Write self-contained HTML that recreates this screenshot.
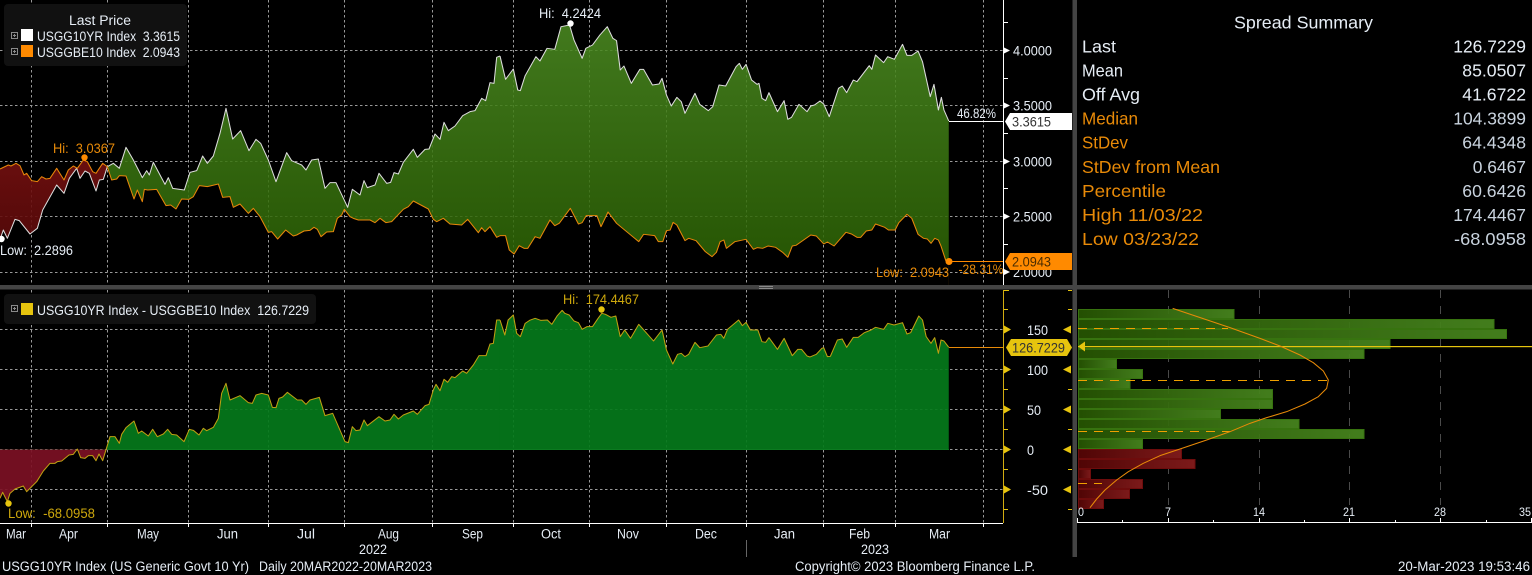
<!DOCTYPE html>
<html><head><meta charset="utf-8"><title>Chart</title>
<style>
html,body{margin:0;padding:0;background:#000;width:1532px;height:575px;overflow:hidden}
svg{display:block}
text{font-family:"Liberation Sans",sans-serif;font-size:13.5px;fill:#e6edf5;white-space:pre}
.a{font-size:14px}
.s{font-size:17.5px}
.o{fill:#e88a08}
.y{fill:#cda70c}
.v{fill:#c9d3de}
.k{fill:#333}
.h{font-size:12px}
</style></head>
<body>
<svg width="1532" height="575" viewBox="0 0 1532 575" xmlns="http://www.w3.org/2000/svg">
<defs>
<linearGradient id="gg" gradientUnits="userSpaceOnUse" x1="0" y1="20" x2="0" y2="265"><stop offset="0" stop-color="#4c8c22"/><stop offset="1" stop-color="#2c6204"/></linearGradient>
<linearGradient id="rg" gradientUnits="userSpaceOnUse" x1="0" y1="160" x2="0" y2="240"><stop offset="0" stop-color="#751010"/><stop offset="1" stop-color="#5c0a0a"/></linearGradient>
<linearGradient id="hg" x1="0" y1="0" x2="1" y2="0"><stop offset="0" stop-color="#265402"/><stop offset="1" stop-color="#47851e"/></linearGradient>
<linearGradient id="hr" x1="0" y1="0" x2="1" y2="0"><stop offset="0" stop-color="#500505"/><stop offset="1" stop-color="#7c1a1a"/></linearGradient>
<g id="wp">
<polygon transform="scale(.33333)" points="0,870 0,718 10,690 22,715 45,658 58,662 90,702 112,685 128,630 170,555 192,580 208,535 230,505 240,535 255,513 268,520 288,573 298,540 310,538 322,500 340,490 358,505 378,442 400,480 427,533 440,512 448,525 460,487 495,553 505,533 518,565 553,570 570,517 590,512 608,468 622,490 640,468 660,400 678,325 698,417 722,392 747,452 768,418 782,430 805,480 828,545 860,458 875,482 905,495 918,510 935,480 955,477 975,565 990,548 1008,548 1043,622 1057,568 1080,585 1092,542 1102,563 1125,555 1137,520 1160,550 1172,547 1182,518 1195,522 1210,487 1240,448 1252,472 1275,448 1287,447 1305,402 1320,418 1332,367 1345,392 1365,378 1388,347 1410,335 1425,332 1445,295 1457,302 1470,248 1482,250 1490,172 1500,168 1500,870"/>
<polygon transform="translate(500 0) scale(.36996 .33333)" points="0,870 0,168 15,238 36,207 48,270 55,272 68,227 97,170 108,183 127,145 148,148 165,80 188,75 200,120 222,175 232,145 250,135 270,105 290,80 305,115 315,122 325,210 335,198 355,250 378,208 388,208 412,255 430,252 438,235 450,285 463,318 478,292 490,305 500,340 527,280 540,313 563,332 575,320 592,255 610,258 638,200 647,190 655,208 665,193 680,240 695,253 700,250 708,295 718,302 727,278 750,335 768,302 778,358 788,352 808,313 830,335 840,318 850,315 865,303 875,312 890,350 915,265 925,258 937,278 955,240 965,245 998,197 1005,208 1015,165 1037,188 1048,170 1066,178 1088,133 1100,166 1113,166 1130,153 1142,185 1163,290 1173,253 1185,330 1193,292 1200,330 1213,363 1213,870"/>
</g>
<g id="op">
<polygon transform="scale(.33333)" points="0,870 0,507 25,495 33,498 48,490 60,497 72,525 80,520 95,542 112,545 125,530 138,537 150,535 170,505 192,540 205,510 220,498 232,505 250,480 262,485 278,515 288,520 308,490 322,500 335,540 350,537 358,527 378,528 402,597 412,570 427,605 433,568 443,570 470,568 498,617 512,615 528,627 545,597 567,598 580,590 598,557 622,560 655,552 668,592 690,590 700,622 720,612 745,640 760,625 780,650 805,697 815,695 833,717 857,690 880,708 890,705 912,693 930,691 942,682 952,688 963,710 980,696 1000,695 1012,655 1025,645 1033,628 1050,650 1060,655 1075,660 1110,660 1125,668 1140,655 1158,668 1175,665 1210,628 1225,620 1240,603 1285,627 1300,658 1310,665 1330,655 1350,672 1385,675 1403,658 1435,698 1445,683 1455,695 1470,680 1490,712 1500,707 1500,870"/>
<polygon transform="translate(500 0) scale(.36996 .33333)" points="0,870 0,707 15,707 25,750 38,762 52,737 65,745 75,745 95,710 108,715 135,660 148,677 160,670 190,625 212,672 222,668 233,647 262,647 273,680 292,636 315,670 375,725 388,703 418,707 428,725 440,725 450,692 460,690 468,667 478,675 500,722 510,715 530,722 555,755 573,770 585,757 595,725 605,720 612,745 635,725 665,718 685,748 695,743 710,745 725,738 745,742 765,758 778,772 790,738 800,736 840,705 855,708 875,732 885,726 903,738 935,697 950,702 965,712 975,712 990,693 1005,690 1015,672 1040,682 1050,690 1068,690 1078,668 1100,643 1113,655 1130,703 1145,715 1155,717 1165,730 1175,715 1185,720 1192,738 1205,782 1213,785 1213,870"/>
</g>
<mask id="mg" maskUnits="userSpaceOnUse" x="0" y="0" width="1010" height="290"><use href="#wp" fill="#fff"/><use href="#op" fill="#000"/></mask>
<mask id="mr" maskUnits="userSpaceOnUse" x="0" y="0" width="1010" height="290"><use href="#op" fill="#fff"/><use href="#wp" fill="#000"/></mask>
<clipPath id="cu"><rect x="0" y="290" width="1010" height="159.5"/></clipPath>
<clipPath id="cd"><rect x="0" y="449.5" width="1010" height="80"/></clipPath>
<g id="sp">
<polygon transform="translate(0 285) scale(.33333)" points="0,493 0,640 8,622 22,650 30,625 45,612 70,603 80,620 110,590 130,558 150,535 165,535 172,530 185,528 207,510 220,508 232,492 242,518 255,520 265,512 278,512 288,527 297,507 308,527 330,455 345,455 358,475 365,448 378,428 402,408 415,445 425,438 445,453 458,433 472,455 490,447 503,433 515,448 530,450 552,470 568,433 580,436 597,450 610,430 620,437 640,427 655,400 665,325 678,295 690,345 720,332 745,353 757,355 768,330 785,325 805,330 817,367 828,368 837,340 848,336 862,322 892,345 905,345 918,358 930,345 958,337 975,392 998,385 1035,470 1045,473 1057,425 1068,437 1080,435 1092,405 1102,422 1137,395 1155,408 1170,405 1182,388 1195,402 1210,390 1240,378 1252,388 1275,362 1287,358 1300,315 1308,298 1320,317 1332,283 1343,292 1355,275 1365,278 1388,258 1400,265 1420,240 1437,212 1458,212 1470,177 1480,175 1490,105 1500,105 1500,493"/>
<polygon transform="translate(500 285) scale(.36996 .33333)" points="0,493 0,105 13,150 22,105 36,90 45,145 55,155 68,115 80,106 95,100 110,106 128,105 140,118 155,92 168,76 175,85 187,90 200,108 212,113 222,133 235,125 250,125 265,100 275,85 285,88 300,97 313,93 325,155 337,135 353,160 375,118 415,168 438,135 450,195 467,237 480,208 490,205 500,215 510,208 527,172 540,188 562,183 585,150 597,148 605,160 615,133 645,105 655,122 665,112 677,135 697,135 708,170 718,172 727,158 750,193 768,160 790,212 805,193 815,193 830,213 838,216 855,208 870,190 875,188 885,215 893,214 912,165 925,162 937,187 955,157 968,157 985,143 1003,135 1015,127 1037,133 1048,115 1065,120 1088,113 1100,147 1110,143 1132,93 1142,105 1152,155 1165,175 1175,158 1185,205 1192,165 1200,168 1213,187 1213,493"/>
</g>
</defs>

<rect width="1532" height="575" fill="#000"/>

<!-- grid -->
<g stroke="#999" stroke-width="1" stroke-dasharray="2.5 2.5" fill="none">
<path d="M31.5 0V285M107.5 0V285M188.5 0V285M268.5 0V285M344.5 0V285M432.5 0V285M513.5 0V285M589.5 0V285M666.5 0V285M746.5 0V285M823.5 0V285M895.5 0V285M983.5 0V285"/>
<path d="M0 50.5H1003M0 105.5H1003M0 161.5H1003M0 216.5H1003M0 272.5H1003"/>
<path d="M31.5 290V523M107.5 290V523M188.5 290V523M268.5 290V523M344.5 290V523M432.5 290V523M513.5 290V523M589.5 290V523M666.5 290V523M746.5 290V523M823.5 290V523M895.5 290V523M983.5 290V523"/>
<path d="M0 329.5H1003M0 369.5H1003M0 409.5H1003M0 449.5H1003M0 489.5H1003"/>
</g>

<!-- top fill -->
<rect x="0" y="0" width="1005" height="285" fill="url(#gg)" fill-opacity=".87" mask="url(#mg)"/>
<rect x="0" y="0" width="1005" height="285" fill="url(#rg)" fill-opacity=".9" mask="url(#mr)"/>

<!-- top lines -->
<g fill="none" stroke="#dcdcdc" stroke-linejoin="round">
<polyline stroke-width="3.1" transform="scale(.33333)" points="0,718 10,690 22,715 45,658 58,662 90,702 112,685 128,630 170,555 192,580 208,535 230,505 240,535 255,513 268,520 288,573 298,540 310,538 322,500 340,490 358,505 378,442 400,480 427,533 440,512 448,525 460,487 495,553 505,533 518,565 553,570 570,517 590,512 608,468 622,490 640,468 660,400 678,325 698,417 722,392 747,452 768,418 782,430 805,480 828,545 860,458 875,482 905,495 918,510 935,480 955,477 975,565 990,548 1008,548 1043,622 1057,568 1080,585 1092,542 1102,563 1125,555 1137,520 1160,550 1172,547 1182,518 1195,522 1210,487 1240,448 1252,472 1275,448 1287,447 1305,402 1320,418 1332,367 1345,392 1365,378 1388,347 1410,335 1425,332 1445,295 1457,302 1470,248 1482,250 1490,172 1500,168"/>
<polyline stroke-width="2.9" transform="translate(500 0) scale(.36996 .33333)" points="0,168 15,238 36,207 48,270 55,272 68,227 97,170 108,183 127,145 148,148 165,80 188,75 200,120 222,175 232,145 250,135 270,105 290,80 305,115 315,122 325,210 335,198 355,250 378,208 388,208 412,255 430,252 438,235 450,285 463,318 478,292 490,305 500,340 527,280 540,313 563,332 575,320 592,255 610,258 638,200 647,190 655,208 665,193 680,240 695,253 700,250 708,295 718,302 727,278 750,335 768,302 778,358 788,352 808,313 830,335 840,318 850,315 865,303 875,312 890,350 915,265 925,258 937,278 955,240 965,245 998,197 1005,208 1015,165 1037,188 1048,170 1066,178 1088,133 1100,166 1113,166 1130,153 1142,185 1163,290 1173,253 1185,330 1193,292 1200,330 1213,363"/>
</g>
<g fill="none" stroke="#e8860a" stroke-linejoin="round">
<polyline stroke-width="3.1" transform="scale(.33333)" points="0,507 25,495 33,498 48,490 60,497 72,525 80,520 95,542 112,545 125,530 138,537 150,535 170,505 192,540 205,510 220,498 232,505 250,480 262,485 278,515 288,520 308,490 322,500 335,540 350,537 358,527 378,528 402,597 412,570 427,605 433,568 443,570 470,568 498,617 512,615 528,627 545,597 567,598 580,590 598,557 622,560 655,552 668,592 690,590 700,622 720,612 745,640 760,625 780,650 805,697 815,695 833,717 857,690 880,708 890,705 912,693 930,691 942,682 952,688 963,710 980,696 1000,695 1012,655 1025,645 1033,628 1050,650 1060,655 1075,660 1110,660 1125,668 1140,655 1158,668 1175,665 1210,628 1225,620 1240,603 1285,627 1300,658 1310,665 1330,655 1350,672 1385,675 1403,658 1435,698 1445,683 1455,695 1470,680 1490,712 1500,707"/>
<polyline stroke-width="2.9" transform="translate(500 0) scale(.36996 .33333)" points="0,707 15,707 25,750 38,762 52,737 65,745 75,745 95,710 108,715 135,660 148,677 160,670 190,625 212,672 222,668 233,647 262,647 273,680 292,636 315,670 375,725 388,703 418,707 428,725 440,725 450,692 460,690 468,667 478,675 500,722 510,715 530,722 555,755 573,770 585,757 595,725 605,720 612,745 635,725 665,718 685,748 695,743 710,745 725,738 745,742 765,758 778,772 790,738 800,736 840,705 855,708 875,732 885,726 903,738 935,697 950,702 965,712 975,712 990,693 1005,690 1015,672 1040,682 1050,690 1068,690 1078,668 1100,643 1113,655 1130,703 1145,715 1155,717 1165,730 1175,715 1185,720 1192,738 1205,782 1213,785"/>
</g>

<!-- lower fill -->
<use href="#sp" fill="#05781b" fill-opacity=".93" clip-path="url(#cu)"/>
<use href="#sp" fill="#7c1024" fill-opacity=".92" clip-path="url(#cd)"/>
<rect x="108" y="449" width="841" height="1" fill="#0c7a20"/>
<!-- lower line -->
<g fill="none" stroke="#bfa012" stroke-linejoin="round">
<polyline stroke-width="3.1" transform="translate(0 285) scale(.33333)" points="0,640 8,622 22,650 30,625 45,612 70,603 80,620 110,590 130,558 150,535 165,535 172,530 185,528 207,510 220,508 232,492 242,518 255,520 265,512 278,512 288,527 297,507 308,527 330,455 345,455 358,475 365,448 378,428 402,408 415,445 425,438 445,453 458,433 472,455 490,447 503,433 515,448 530,450 552,470 568,433 580,436 597,450 610,430 620,437 640,427 655,400 665,325 678,295 690,345 720,332 745,353 757,355 768,330 785,325 805,330 817,367 828,368 837,340 848,336 862,322 892,345 905,345 918,358 930,345 958,337 975,392 998,385 1035,470 1045,473 1057,425 1068,437 1080,435 1092,405 1102,422 1137,395 1155,408 1170,405 1182,388 1195,402 1210,390 1240,378 1252,388 1275,362 1287,358 1300,315 1308,298 1320,317 1332,283 1343,292 1355,275 1365,278 1388,258 1400,265 1420,240 1437,212 1458,212 1470,177 1480,175 1490,105 1500,105"/>
<polyline stroke-width="2.9" transform="translate(500 285) scale(.36996 .33333)" points="0,105 13,150 22,105 36,90 45,145 55,155 68,115 80,106 95,100 110,106 128,105 140,118 155,92 168,76 175,85 187,90 200,108 212,113 222,133 235,125 250,125 265,100 275,85 285,88 300,97 313,93 325,155 337,135 353,160 375,118 415,168 438,135 450,195 467,237 480,208 490,205 500,215 510,208 527,172 540,188 562,183 585,150 597,148 605,160 615,133 645,105 655,122 665,112 677,135 697,135 708,170 718,172 727,158 750,193 768,160 790,212 805,193 815,193 830,213 838,216 855,208 870,190 875,188 885,215 893,214 912,165 925,162 937,187 955,157 968,157 985,143 1003,135 1015,127 1037,133 1048,115 1065,120 1088,113 1100,147 1110,143 1132,93 1142,105 1152,155 1165,175 1175,158 1185,205 1192,165 1200,168 1213,187"/>
</g>

<!-- legends -->
<rect x="4" y="4" width="183" height="62" rx="4" fill="#111"/>
<rect x="4" y="294" width="312" height="30" rx="4" fill="#111"/>
<g fill="none" stroke="#8a8a8a" stroke-width="1">
<path d="M11.5 32.5h6v6h-6zM13 35.5h3M14.5 34v3"/>
<path d="M11.5 48.5h6v6h-6zM13 51.5h3M14.5 50v3"/>
<path d="M11.5 305.5h6v6h-6zM13 308.5h3M14.5 307v3"/>
</g>
<rect x="21" y="29" width="12" height="12" fill="#fff"/>
<rect x="21" y="45" width="12" height="12" fill="#ff8a00"/>
<rect x="21" y="303" width="12" height="12" fill="#e6c40e"/>
<text x="69" y="25" textLength="62" lengthAdjust="spacingAndGlyphs">Last Price</text>
<text x="37" y="41" textLength="143" lengthAdjust="spacingAndGlyphs">USGG10YR Index  3.3615</text>
<text x="37" y="57" textLength="143" lengthAdjust="spacingAndGlyphs">USGGBE10 Index  2.0943</text>
<text x="37" y="315" textLength="272" lengthAdjust="spacingAndGlyphs">USGG10YR Index - USGGBE10 Index  126.7229</text>

<!-- markers & annotations -->
<circle cx="1.5" cy="239" r="3.2" fill="#fff"/>
<circle cx="84.5" cy="157.5" r="3.2" fill="#ff8a00"/>
<circle cx="570.5" cy="23.5" r="3.2" fill="#fff"/>
<circle cx="949" cy="261.5" r="3.5" fill="#ff8a00"/>
<circle cx="601.5" cy="309.5" r="3.2" fill="#e6c40e"/>
<circle cx="8.5" cy="503.5" r="3.2" fill="#e6c40e"/>
<text x="0" y="255" textLength="73" lengthAdjust="spacingAndGlyphs">Low:  2.2896</text>
<text class="o" x="53" y="153" textLength="62" lengthAdjust="spacingAndGlyphs">Hi:  3.0367</text>
<text x="539" y="18" textLength="62" lengthAdjust="spacingAndGlyphs">Hi:  4.2424</text>
<text x="957" y="118" textLength="39" lengthAdjust="spacingAndGlyphs">46.82%</text>
<text class="y" x="563" y="304" textLength="76" lengthAdjust="spacingAndGlyphs">Hi:  174.4467</text>
<text class="y" x="8" y="518" textLength="87" lengthAdjust="spacingAndGlyphs">Low:  -68.0958</text>

<!-- top axis -->
<rect x="1003" y="0" width="1" height="285" fill="#fff"/>
<g fill="#fff">
<polygon points="1004,47.5 1010,50.5 1004,53.5"/><polygon points="1004,102.5 1010,105.5 1004,108.5"/><polygon points="1004,158.5 1010,161.5 1004,164.5"/><polygon points="1004,213.5 1010,216.5 1004,219.5"/><polygon points="1004,269 1010,272 1004,275"/>
<rect x="1004" y="22" width="4" height="1"/><rect x="1004" y="78" width="4" height="1"/><rect x="1004" y="133" width="4" height="1"/><rect x="1004" y="188" width="4" height="1"/><rect x="1004" y="244" width="4" height="1"/>
</g>
<text class="a" x="1013" y="55.5" textLength="39" lengthAdjust="spacingAndGlyphs">4.0000</text>
<text class="a" x="1013" y="110.5" textLength="39" lengthAdjust="spacingAndGlyphs">3.5000</text>
<text class="a" x="1013" y="166.5" textLength="39" lengthAdjust="spacingAndGlyphs">3.0000</text>
<text class="a" x="1013" y="221.5" textLength="39" lengthAdjust="spacingAndGlyphs">2.5000</text>
<text class="a" x="1013" y="277" textLength="39" lengthAdjust="spacingAndGlyphs">2.0000</text>
<rect x="949" y="121" width="54" height="1" fill="#fff"/>
<rect x="949" y="261" width="54" height="1" fill="#ff8a00"/>
<polygon points="1005,121.5 1010,113 1072,113 1072,130 1010,130" fill="#fff"/>
<polygon points="1005,261.5 1010,253 1072,253 1072,270 1010,270" fill="#ff8a00"/>
<text class="a k" x="1012" y="126.5" textLength="39" lengthAdjust="spacingAndGlyphs">3.3615</text>
<text class="a k" x="1012" y="266.5" textLength="39" lengthAdjust="spacingAndGlyphs" style="fill:#4a2c00">2.0943</text>
<text class="o" x="876" y="277" textLength="73" lengthAdjust="spacingAndGlyphs">Low:  2.0943</text>
<text class="o" x="958.5" y="274" textLength="45" lengthAdjust="spacingAndGlyphs">-28.31%</text>

<!-- lower axis -->
<rect x="1003" y="290" width="1" height="233" fill="#d2ac10"/>
<g fill="#e6c40e">
<polygon points="1004,325.5 1011,329.5 1004,333.5"/><polygon points="1004,365.5 1011,369.5 1004,373.5"/><polygon points="1004,405.5 1011,409.5 1004,413.5"/><polygon points="1004,445.5 1011,449.5 1004,453.5"/><polygon points="1004,485.5 1011,489.5 1004,493.5"/>
<rect x="1004" y="290" width="5" height="1"/><rect x="1004" y="309" width="4" height="1"/><rect x="1004" y="389" width="4" height="1"/><rect x="1004" y="429" width="4" height="1"/><rect x="1004" y="469" width="4" height="1"/><rect x="1004" y="509" width="4" height="1"/>
<polygon points="1071,325.5 1063,329.5 1071,333.5"/><polygon points="1071,365.5 1063,369.5 1071,373.5"/><polygon points="1071,405.5 1063,409.5 1071,413.5"/><polygon points="1071,445.5 1063,449.5 1071,453.5"/><polygon points="1071,485.5 1063,489.5 1071,493.5"/>
<rect x="1068" y="290" width="4" height="1"/><rect x="1068" y="309" width="4" height="1"/><rect x="1068" y="389" width="4" height="1"/><rect x="1068" y="429" width="4" height="1"/><rect x="1068" y="469" width="4" height="1"/><rect x="1068" y="509" width="4" height="1"/>
</g>
<text class="a" x="1027" y="335" textLength="21" lengthAdjust="spacingAndGlyphs">150</text>
<text class="a" x="1027" y="375" textLength="21" lengthAdjust="spacingAndGlyphs">100</text>
<text class="a" x="1027" y="415" textLength="14" lengthAdjust="spacingAndGlyphs">50</text>
<text class="a" x="1027" y="455" textLength="7" lengthAdjust="spacingAndGlyphs">0</text>
<text class="a" x="1027" y="495" textLength="21" lengthAdjust="spacingAndGlyphs">-50</text>
<rect x="949" y="347" width="54" height="1" fill="#e88a08"/>
<polygon points="1006,347.5 1011,339 1067,339 1072,347.5 1067,356 1011,356" fill="#e6c40e"/>
<text class="a k" x="1012" y="352.5" textLength="53" lengthAdjust="spacingAndGlyphs">126.7229</text>

<!-- x axis -->
<rect x="0" y="523" width="1003" height="1" fill="#fff"/>
<path d="M31.5 523v4M107.5 523v4M188.5 523v4M268.5 523v4M344.5 523v4M432.5 523v4M513.5 523v4M589.5 523v4M666.5 523v4M746.5 523v4M823.5 523v4M895.5 523v4M983.5 523v4" stroke="#fff" fill="none"/>
<text x="6" y="538.5" textLength="20" lengthAdjust="spacingAndGlyphs">Mar</text>
<text x="59" y="538.5" textLength="19" lengthAdjust="spacingAndGlyphs">Apr</text>
<text x="137" y="538.5" textLength="22" lengthAdjust="spacingAndGlyphs">May</text>
<text x="217" y="538.5" textLength="21" lengthAdjust="spacingAndGlyphs">Jun</text>
<text x="297" y="538.5" textLength="18" lengthAdjust="spacingAndGlyphs">Jul</text>
<text x="378" y="538.5" textLength="21" lengthAdjust="spacingAndGlyphs">Aug</text>
<text x="462" y="538.5" textLength="21" lengthAdjust="spacingAndGlyphs">Sep</text>
<text x="541" y="538.5" textLength="20" lengthAdjust="spacingAndGlyphs">Oct</text>
<text x="617" y="538.5" textLength="22" lengthAdjust="spacingAndGlyphs">Nov</text>
<text x="695" y="538.5" textLength="22" lengthAdjust="spacingAndGlyphs">Dec</text>
<text x="774" y="538.5" textLength="21" lengthAdjust="spacingAndGlyphs">Jan</text>
<text x="849" y="538.5" textLength="21" lengthAdjust="spacingAndGlyphs">Feb</text>
<text x="929" y="538.5" textLength="21" lengthAdjust="spacingAndGlyphs">Mar</text>
<text x="359" y="554" textLength="28" lengthAdjust="spacingAndGlyphs">2022</text>
<text x="861" y="554" textLength="28" lengthAdjust="spacingAndGlyphs">2023</text>
<rect x="746" y="540" width="1" height="17" fill="#666"/>
<text x="2" y="571" textLength="247" lengthAdjust="spacingAndGlyphs">USGG10YR Index (US Generic Govt 10 Yr)</text>
<text x="259" y="571" textLength="173" lengthAdjust="spacingAndGlyphs">Daily 20MAR2022-20MAR2023</text>
<text x="795" y="571" textLength="240" lengthAdjust="spacingAndGlyphs">Copyright© 2023 Bloomberg Finance L.P.</text>
<text x="1398" y="571" textLength="132" lengthAdjust="spacingAndGlyphs">20-Mar-2023 19:53:46</text>

<!-- histogram -->
<g stroke="#4a4a4a" stroke-dasharray="8 8" fill="none">
<path d="M1168.5 290V505M1259.5 290V505M1349.5 290V505M1440.5 290V505"/>
</g>
<g fill="url(#hg)" stroke="#37730f" stroke-width="1" fill-opacity=".94">
<rect x="1078.5" y="309.5" width="155.5" height="9"/>
<rect x="1078.5" y="319.5" width="415.5" height="9"/>
<rect x="1078.5" y="329.5" width="428" height="9"/>
<rect x="1078.5" y="339.5" width="311.5" height="9"/>
<rect x="1078.5" y="349.5" width="285.5" height="9"/>
<rect x="1078.5" y="359.5" width="38" height="9"/>
<rect x="1078.5" y="369.5" width="64" height="9"/>
<rect x="1078.5" y="379.5" width="51.5" height="9"/>
<rect x="1078.5" y="389.5" width="194" height="9"/>
<rect x="1078.5" y="399.5" width="194" height="9"/>
<rect x="1078.5" y="409.5" width="142" height="9"/>
<rect x="1078.5" y="419.5" width="220.5" height="9"/>
<rect x="1078.5" y="429.5" width="285.5" height="9"/>
<rect x="1078.5" y="439.5" width="64" height="9"/>
</g>
<g fill="url(#hr)" stroke="#6e0c0c" stroke-width="1">
<rect x="1078.5" y="449.5" width="103" height="9"/>
<rect x="1078.5" y="459.5" width="116.5" height="9"/>
<rect x="1078.5" y="469.5" width="12" height="9"/>
<rect x="1078.5" y="479.5" width="64" height="9"/>
<rect x="1078.5" y="489.5" width="51" height="9"/>
<rect x="1078.5" y="499.5" width="25" height="9"/>
</g>
<g stroke="#f0a000" stroke-width="1" stroke-dasharray="9 7" fill="none">
<path d="M1078 328.5H1228M1078 380.5H1328M1078 431.5H1230M1078 483.5H1102"/>
</g>
<rect x="1078" y="346" width="454" height="1.2" fill="#e6c40e"/>
<polygon points="1078,346.5 1085,341.5 1085,351.5" fill="#e6c40e"/>
<path transform="translate(1060 285) scale(.33333)" fill="none" stroke="#e88a08" stroke-width="3.1" stroke-linejoin="round" d="M338 70L510 128L600 160L660 183L720 210L760 233L790 258L805 285L800 310L775 335L735 357L680 380L620 398L570 415L510 440L440 465L360 492L300 512L250 535L205 560L170 585L135 615L110 642L90 668"/>
<rect x="1077" y="522" width="455" height="1" fill="#fff"/>
<path d="M1077.5 522v-4M1168.5 522v-4M1259.5 522v-4M1349.5 522v-4M1440.5 522v-4M1531.5 522v-4M1122.5 522v-2M1213.5 522v-2M1304.5 522v-2M1395.5 522v-2M1486.5 522v-2" stroke="#fff" fill="none"/>
<text class="h" x="1078" y="516" textLength="6" lengthAdjust="spacingAndGlyphs">0</text>
<text class="h" x="1165" y="516" textLength="6" lengthAdjust="spacingAndGlyphs">7</text>
<text class="h" x="1253" y="516" textLength="12" lengthAdjust="spacingAndGlyphs">14</text>
<text class="h" x="1343" y="516" textLength="12" lengthAdjust="spacingAndGlyphs">21</text>
<text class="h" x="1434" y="516" textLength="12" lengthAdjust="spacingAndGlyphs">28</text>
<text class="h" x="1519" y="516" textLength="12" lengthAdjust="spacingAndGlyphs">35</text>

<!-- summary -->
<text class="s" x="1234" y="28.5" textLength="139" lengthAdjust="spacingAndGlyphs">Spread Summary</text>
<text class="s" x="1082" y="52.5" textLength="34" lengthAdjust="spacingAndGlyphs">Last</text>
<text class="s" x="1082" y="76.5" textLength="41" lengthAdjust="spacingAndGlyphs">Mean</text>
<text class="s" x="1082" y="100.5" textLength="58" lengthAdjust="spacingAndGlyphs">Off Avg</text>
<text class="s o" x="1082" y="124.5" textLength="56" lengthAdjust="spacingAndGlyphs">Median</text>
<text class="s o" x="1082" y="148.5" textLength="46" lengthAdjust="spacingAndGlyphs">StDev</text>
<text class="s o" x="1082" y="173" textLength="138" lengthAdjust="spacingAndGlyphs">StDev from Mean</text>
<text class="s o" x="1082" y="197" textLength="84" lengthAdjust="spacingAndGlyphs">Percentile</text>
<text class="s o" x="1082" y="221" textLength="121" lengthAdjust="spacingAndGlyphs">High 11/03/22</text>
<text class="s o" x="1082" y="245" textLength="117" lengthAdjust="spacingAndGlyphs">Low 03/23/22</text>
<text class="s" x="1453.3" y="52.5" textLength="72.7" lengthAdjust="spacingAndGlyphs">126.7229</text>
<text class="s" x="1462.3" y="76.5" textLength="63.7" lengthAdjust="spacingAndGlyphs">85.0507</text>
<text class="s" x="1462.3" y="100.5" textLength="63.7" lengthAdjust="spacingAndGlyphs">41.6722</text>
<text class="s v" x="1453.3" y="124.5" textLength="72.7" lengthAdjust="spacingAndGlyphs">104.3899</text>
<text class="s v" x="1462.3" y="148.5" textLength="63.7" lengthAdjust="spacingAndGlyphs">64.4348</text>
<text class="s v" x="1472.7" y="173" textLength="53.3" lengthAdjust="spacingAndGlyphs">0.6467</text>
<text class="s v" x="1462.3" y="197" textLength="63.7" lengthAdjust="spacingAndGlyphs">60.6426</text>
<text class="s v" x="1453.3" y="221" textLength="72.7" lengthAdjust="spacingAndGlyphs">174.4467</text>
<text class="s v" x="1454" y="245" textLength="72" lengthAdjust="spacingAndGlyphs">-68.0958</text>

<!-- dividers -->
<rect x="0" y="285" width="1532" height="4.5" fill="#444"/>
<rect x="1072.5" y="0" width="4.5" height="557" fill="#444"/>
<path d="M759 286.5h14M759 288.5h14" stroke="#8a8a8a" stroke-width="1" fill="none"/>
</svg>
</body></html>
